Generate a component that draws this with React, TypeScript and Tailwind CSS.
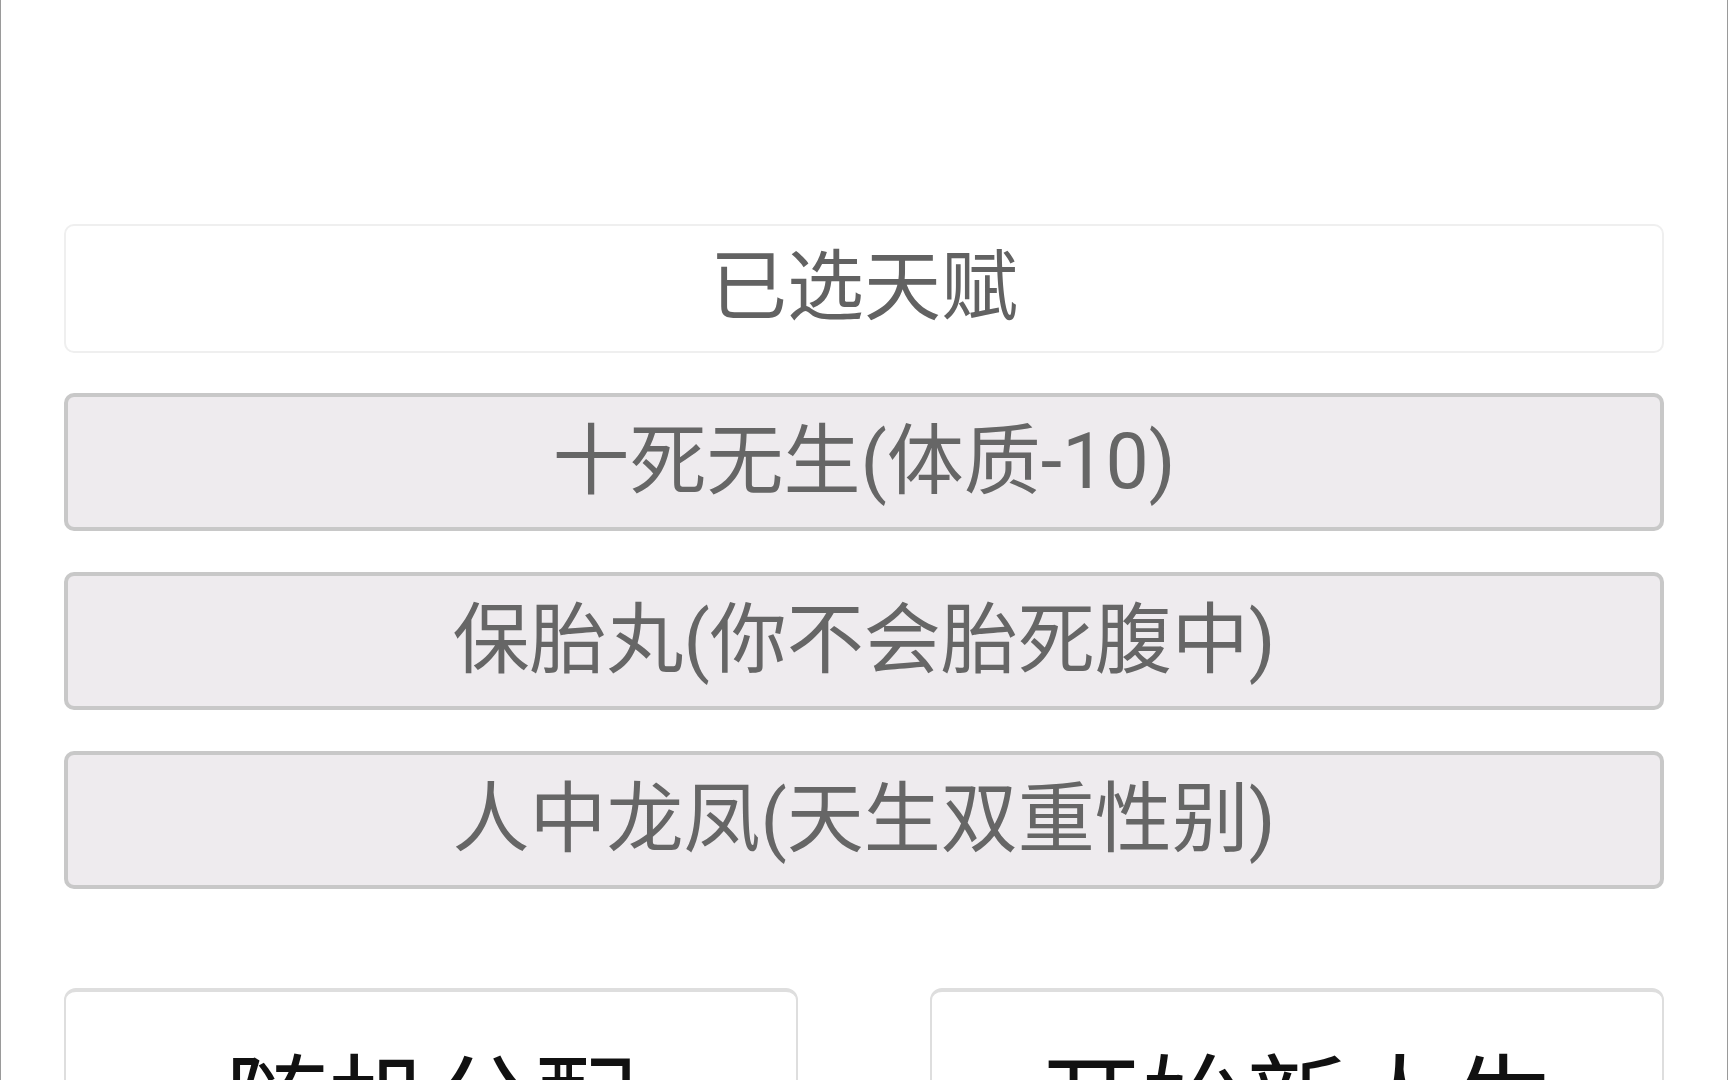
const talents = [
  '十死无生(体质-10)',
  '保胎丸(你不会胎死腹中)',
  '人中龙凤(天生双重性别)',
];

const font = "font-['Roboto','Noto_Sans_CJK_SC',sans-serif]";

export default function App() {
  return (
    <div
      className={`h-[1080px] w-full overflow-hidden bg-white border-x border-[#9a9a9a] px-[63px] pt-[224px] ${font}`}
    >
      <div className="flex flex-col">
        <div className="h-[129px] rounded-[10px] border-2 border-[#efefef] bg-white flex items-center justify-center">
          <span className="text-[77px] leading-none text-[#626262]">已选天赋</span>
        </div>

        <div className="mt-[40px] flex flex-col gap-[41px]">
          {talents.map((t) => (
            <div
              key={t}
              className="h-[138px] rounded-[10px] border-[4px] border-[#c8c8c8] bg-[#eeebee] flex items-center justify-center"
            >
              <span className="text-[77px] leading-none text-[#666666] whitespace-nowrap">{t}</span>
            </div>
          ))}
        </div>

        <div className="mt-[99px] grid grid-cols-2 gap-[132px]">
          <button className="h-[240px] rounded-[12px] border-2 border-t-4 border-[#dedede] bg-white flex justify-center pt-[62px]">
            <span className="text-[103px] leading-none text-[#111111]">随机分配</span>
          </button>
          <button className="h-[240px] rounded-[12px] border-2 border-t-4 border-[#dedede] bg-white flex justify-center pt-[62px]">
            <span className="text-[103px] leading-none text-[#111111]">开始新人生</span>
          </button>
        </div>
      </div>
    </div>
  );
}
